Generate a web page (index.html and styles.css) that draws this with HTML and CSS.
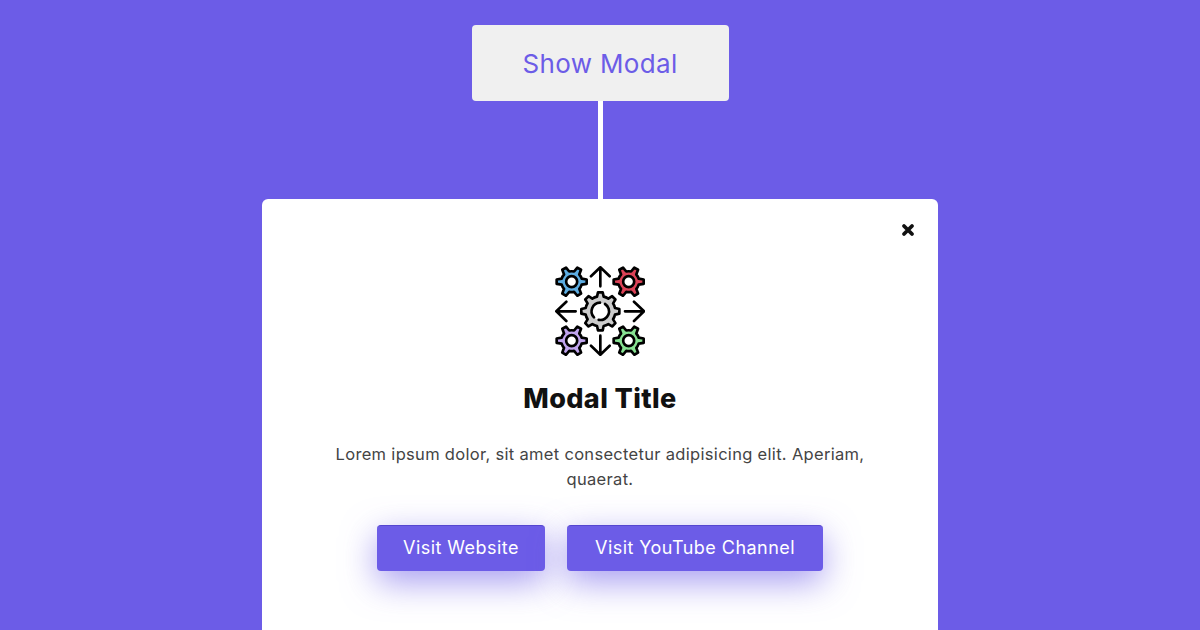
FILE: index.html
```
<!DOCTYPE html>
<html lang="en">
<head>
    <meta charset="UTF-8">
    <meta name="viewport" content="width=device-width, initial-scale=1.0">
    <title>Modal</title>
    <link rel="stylesheet" href="styles.css">
</head>
<body>
    <button class="show-modal"><span>Show Modal</span></button>
    <div class="line"></div>
    <div class="modal">
        <button class="close-modal" aria-label="Close">
            <svg viewBox="0 0 14 14"><path d="M3 3l8 8M11 3l-8 8"/></svg>
        </button>
        <svg class="modal-icon" viewBox="30 33 270 270">
            <defs>
                <path id="gear" d="M30-9L45-6.5V6.5L30 9A31 31 0 0 1 22.8 21.5L28.1 35.7 16.9 42.2 7.2 30.5A31 31 0 0 1-7.2 30.5L-16.9 42.2-28.1 35.7-22.8 21.5A31 31 0 0 1-30 9L-45 6.5V-6.5L-30-9A31 31 0 0 1-22.8-21.5L-28.1-35.7-16.9-42.2-7.2-30.5A31 31 0 0 1 7.2-30.5L16.9-42.2 28.1-35.7 22.8-21.5A31 31 0 0 1 30-9Z"/>
            </defs>
            <!-- corner gears -->
            <g transform="translate(80 80)"><use href="#gear" fill="#5dade2"/><circle r="16.5"/></g>
            <g transform="translate(251 80)"><use href="#gear" fill="#dc4257"/><circle r="16.5"/></g>
            <g transform="translate(80 257)"><use href="#gear" fill="#c0a5ee"/><circle r="16.5"/></g>
            <g transform="translate(251 257)"><use href="#gear" fill="#87e292"/><circle r="16.5"/></g>
            <!-- center gear -->
            <g transform="translate(166 169)">
                <path fill="#ccc" d="M44-10L57-7V7L44 10A45 45 0 0 1 38.2 24L45.3 35.4 35.4 45.3 24 38.2A45 45 0 0 1 10 44L7 57H-7L-10 44A45 45 0 0 1-24 38.2L-35.4 45.3-45.3 35.4-38.2 24A45 45 0 0 1-44 10L-57 7V-7L-44-10A45 45 0 0 1-38.2-24L-45.3-35.4-35.4-45.3-24-38.2A45 45 0 0 1-10-44L-7-57H7L10-44A45 45 0 0 1 24-38.2L35.4-45.3 45.3-35.4 38.2-24A45 45 0 0 1 44-10Z"/>
                <circle class="hole" r="26"/>
                <path d="M-1-26A26 26 0 0 0-19 18M-5 25.5A26 26 0 0 0 14-22"/>
            </g>
            <!-- arrows -->
            <path d="M166 94V38M138 64L166 37 194 64M166 242V298M138 272L166 299 194 272M92 169H36M64 140L34 169 64 198M240 169H296M267 140L297 169 267 198"/>
        </svg>
        <h2>Modal Title</h2>
        <p>Lorem ipsum dolor, sit amet consectetur adipisicing elit. Aperiam, quaerat.</p>
        <div class="buttons">
            <a class="btn btn-website"><span>Visit Website</span></a>
            <a class="btn btn-youtube"><span>Visit YouTube Channel</span></a>
        </div>
    </div>
</body>
</html>
```
FILE: styles.css
```
* { margin: 0; padding: 0; box-sizing: border-box; }
body {
    font-family: Inter, 'Open Sans', sans-serif;
    background-color: #6c5ce7;
    height: 630px;
    padding-top: 24.5px;
    display: flex;
    flex-direction: column;
    align-items: center;
}
.show-modal {
    flex-shrink: 0;
    width: 257px;
    height: 76.5px;
    padding-top: 2px;
    border: none;
    border-radius: 4px;
    background-color: #f0f0f0;
    color: #6c5ce7;
    font-family: inherit;
    font-size: 26px;
    letter-spacing: 0.35px;
}
.line {
    flex-shrink: 0;
    width: 5px;
    height: 97.5px;
    background-color: white;
}
.modal {
    flex: 1;
    position: relative;
    width: 676px;
    padding: 67.5px 70px 0;
    border-radius: 6px 6px 0 0;
    background-color: white;
    display: flex;
    flex-direction: column;
    align-items: center;
    text-align: center;
}
.close-modal {
    position: absolute;
    top: 24px;
    right: 23px;
    width: 14px;
    height: 14px;
    border: none;
    background: none;
    cursor: pointer;
}
.close-modal svg {
    display: block;
    fill: none;
    stroke: #111;
    stroke-width: 3.8;
    stroke-linecap: round;
}
.modal-icon {
    flex-shrink: 0;
    width: 90px;
    height: 90px;
    fill: none;
    stroke: #000;
    stroke-width: 8;
    stroke-linecap: round;
    stroke-linejoin: round;
}
.modal-icon circle { fill: white; }
.modal-icon .hole { stroke: none; }
.modal h2 {
    margin-top: 23px;
    color: #111;
    font-size: 27px;
    font-weight: 800;
    letter-spacing: 0.4px;
    line-height: 40px;
}
.modal p {
    margin: 22.5px -10px 0;
    color: #444;
    font-size: 16.5px;
    letter-spacing: 0.31px;
    line-height: 25.5px;
}
.buttons {
    display: flex;
    gap: 22px;
    margin-top: 32px;
}
.btn {
    height: 46px;
    border-radius: 4px;
    border-top: 1px solid #5546d0;
    background-color: #6c5ce7;
    box-shadow: 0 11px 34px rgba(108, 92, 231, 0.6);
    color: white;
    font-size: 18px;
    letter-spacing: 0.45px;
    line-height: 44px;
}
.btn-website { width: 168px; }
.btn-youtube { width: 256px; }
```
